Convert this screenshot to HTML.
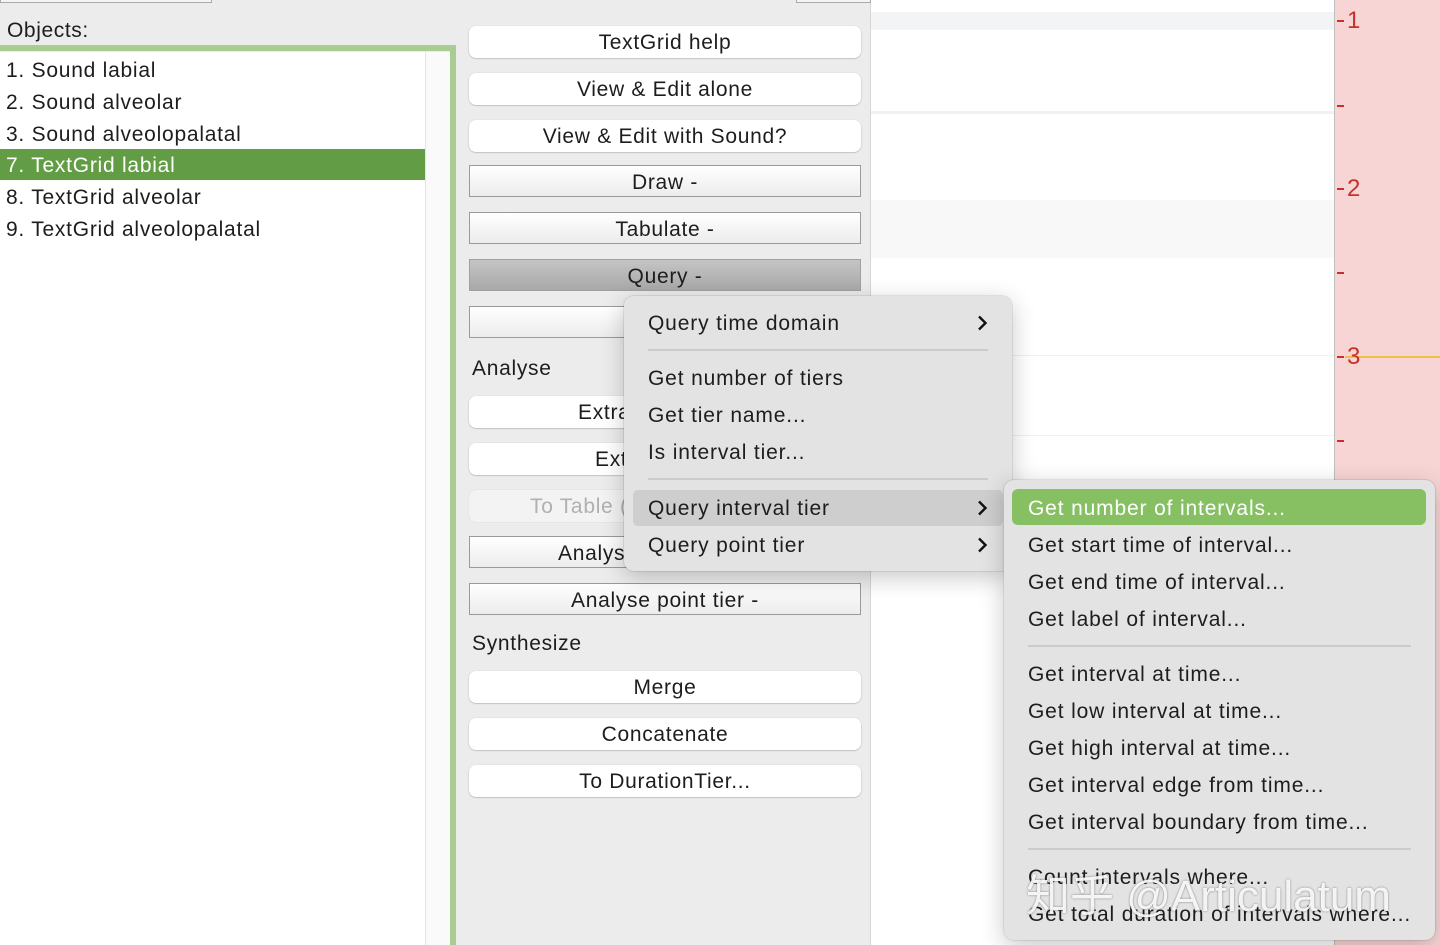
<!DOCTYPE html>
<html><head><meta charset="utf-8"><style>
*{margin:0;padding:0;box-sizing:border-box}
body{width:1440px;height:945px;overflow:hidden;position:relative;background:#fff;font-family:"Liberation Sans","Noto Sans CJK SC",sans-serif;color:#1d1d1d}
.abs{position:absolute}
.left{left:0;top:0;width:871px;height:945px;background:#ececec;border-right:1px solid #d6d6d6}
.list{left:0;top:52px;width:425px;height:893px;background:#fff}
.row{position:absolute;left:6px;font-size:21px;letter-spacing:0.75px;height:32px;line-height:34px}
.btn{position:absolute;left:469px;width:392px;height:32px;line-height:33px;text-align:center;font-size:21px;letter-spacing:0.7px;background:#fff;border-radius:7px;box-shadow:0 0.5px 1.5px rgba(0,0,0,.3);white-space:nowrap;overflow:hidden}
.sq{border-radius:0;border:1.5px solid #9a9a9a;background:linear-gradient(#fff,#ececec);box-shadow:none}
.lbl{position:absolute;left:472px;font-size:21px;letter-spacing:0.7px}
.menu{background:#e3e3e3;border-radius:10px;box-shadow:0 6px 24px rgba(0,0,0,.22),0 0 0 1px rgba(0,0,0,.08)}
.mi{position:absolute;font-size:21px;letter-spacing:0.85px;line-height:38px;height:36px;white-space:nowrap}
.sep{position:absolute;height:2px;background:#cbcbcb}
.chev{position:absolute;width:12px;height:18px}
.red{position:absolute;color:#c8302a;font-size:24px}
.tick{position:absolute;left:1337px;width:7px;height:2px;background:#c8302a}
</style></head><body>
<div class="abs" style="left:871px;top:12px;width:464px;height:18px;background:#f3f4f5"></div>
<div class="abs" style="left:871px;top:111px;width:464px;height:3px;background:#f1f1f2"></div>
<div class="abs" style="left:871px;top:200px;width:464px;height:58px;background:#f8f8f8"></div>
<div class="abs" style="left:871px;top:355px;width:464px;height:1px;background:#f0f0f0"></div>
<div class="abs" style="left:871px;top:435px;width:464px;height:1px;background:#f0f0f0"></div>
<div class="abs" style="left:1334px;top:0;width:1px;height:945px;background:#bfbfbf"></div>
<div class="abs" style="left:1335px;top:0;width:105px;height:945px;background:#f7d5d5"></div>
<div class="abs" style="left:1345px;top:356px;width:95px;height:2px;background:#f0c040"></div>
<div class="tick" style="top:20px"></div><div class="red" style="left:1347px;top:7px">1</div>
<div class="tick" style="top:188px"></div><div class="red" style="left:1347px;top:175px">2</div>
<div class="tick" style="top:356px"></div><div class="red" style="left:1347px;top:343px">3</div>
<div class="tick" style="top:105px"></div>
<div class="tick" style="top:272px"></div>
<div class="tick" style="top:440px"></div>

<div class="abs left"></div>
<div class="abs" style="left:0;top:0;width:212px;height:3px;border:1px solid #aaa;border-top:none;background:#f4f4f4"></div>
<div class="abs" style="left:796px;top:0;width:75px;height:3px;border:1px solid #aaa;border-top:none;background:#f4f4f4"></div>
<div class="abs" style="left:7px;top:19px;font-size:21px;letter-spacing:0.6px">Objects:</div>
<div class="abs list"></div>
<div class="abs" style="left:425px;top:52px;width:26px;height:893px;background:#fafafa;border-left:1px solid #e4e4e4"></div>
<div class="abs" style="left:0;top:45px;width:456px;height:6px;background:#a8cc91;border-radius:0 4px 0 0"></div>
<div class="abs" style="left:450px;top:45px;width:6px;height:900px;background:#a8cc91"></div>
<div class="abs" style="left:0;top:149px;width:425px;height:31px;background:#629c44"></div>
<div class="row" style="top:54px">1. Sound labial</div>
<div class="row" style="top:86px">2. Sound alveolar</div>
<div class="row" style="top:118px">3. Sound alveolopalatal</div>
<div class="row" style="top:149px;color:#fff">7. TextGrid labial</div>
<div class="row" style="top:181px">8. TextGrid alveolar</div>
<div class="row" style="top:213px">9. TextGrid alveolopalatal</div>

<div class="btn" style="top:26px">TextGrid help</div>
<div class="btn" style="top:73px">View &amp; Edit alone</div>
<div class="btn" style="top:120px">View &amp; Edit with Sound?</div>
<div class="btn sq" style="top:165px">Draw -</div>
<div class="btn sq" style="top:212px">Tabulate -</div>
<div class="btn sq" style="top:259px;background:linear-gradient(#c4c4c4,#a9a9a9);border-color:#a0a0a0">Query -</div>
<div class="btn sq" style="top:306px"></div>
<div class="lbl" style="top:357px">Analyse</div>
<div class="btn" style="top:396px;text-align:left;padding-left:109px">Extract tier...</div>
<div class="btn" style="top:443px;text-align:left;padding-left:126px">Extract part...</div>
<div class="btn" style="top:490px;color:#b0b0b0;background:#f3f3f3;box-shadow:0 0 1px rgba(0,0,0,.15);text-align:left;padding-left:61px">To Table (</div>
<div class="btn sq" style="top:536px;text-align:left;padding-left:88px">Analyse interval tier -</div>
<div class="btn sq" style="top:583px">Analyse point tier -</div>
<div class="lbl" style="top:632px">Synthesize</div>
<div class="btn" style="top:671px">Merge</div>
<div class="btn" style="top:718px">Concatenate</div>
<div class="btn" style="top:765px">To DurationTier...</div>

<div class="abs menu" style="left:624px;top:296px;width:388px;height:275px"></div>
<div class="abs" style="left:633px;top:490px;width:370px;height:36px;background:#cecece;border-radius:5px"></div>
<div class="mi" style="left:648px;top:305px">Query time domain</div>
<svg class="chev" style="left:976px;top:314px" viewBox="0 0 12 18"><path d="M3 2.5 L9.5 9 L3 15.5" fill="none" stroke="#111" stroke-width="2.4"/></svg>
<div class="sep" style="left:648px;top:349px;width:340px"></div>
<div class="mi" style="left:648px;top:360px">Get number of tiers</div>
<div class="mi" style="left:648px;top:397px">Get tier name...</div>
<div class="mi" style="left:648px;top:434px">Is interval tier...</div>
<div class="sep" style="left:648px;top:478px;width:340px"></div>
<div class="mi" style="left:648px;top:490px">Query interval tier</div>
<svg class="chev" style="left:976px;top:499px" viewBox="0 0 12 18"><path d="M3 2.5 L9.5 9 L3 15.5" fill="none" stroke="#111" stroke-width="2.4"/></svg>
<div class="mi" style="left:648px;top:527px">Query point tier</div>
<svg class="chev" style="left:976px;top:536px" viewBox="0 0 12 18"><path d="M3 2.5 L9.5 9 L3 15.5" fill="none" stroke="#111" stroke-width="2.4"/></svg>

<div class="abs menu" style="left:1004px;top:480px;width:431px;height:460px"></div>
<div class="abs" style="left:1012px;top:489px;width:414px;height:36px;background:#86c063;border-radius:6px"></div>
<div class="mi" style="left:1028px;top:490px;color:#fff">Get number of intervals...</div>
<div class="mi" style="left:1028px;top:527px">Get start time of interval...</div>
<div class="mi" style="left:1028px;top:564px">Get end time of interval...</div>
<div class="mi" style="left:1028px;top:601px">Get label of interval...</div>
<div class="sep" style="left:1028px;top:645px;width:383px"></div>
<div class="mi" style="left:1028px;top:656px">Get interval at time...</div>
<div class="mi" style="left:1028px;top:693px">Get low interval at time...</div>
<div class="mi" style="left:1028px;top:730px">Get high interval at time...</div>
<div class="mi" style="left:1028px;top:767px">Get interval edge from time...</div>
<div class="mi" style="left:1028px;top:804px">Get interval boundary from time...</div>
<div class="sep" style="left:1028px;top:848px;width:383px"></div>
<div class="mi" style="left:1028px;top:859px">Count intervals where...</div>
<div class="mi" style="left:1028px;top:896px">Get total duration of intervals where...</div>
<div class="abs" style="left:1026px;top:860px;font-size:44px;color:rgba(255,255,255,.9);text-shadow:0 0 2px rgba(0,0,0,.45);white-space:nowrap">知乎 @Articulatum</div>
</body></html>
